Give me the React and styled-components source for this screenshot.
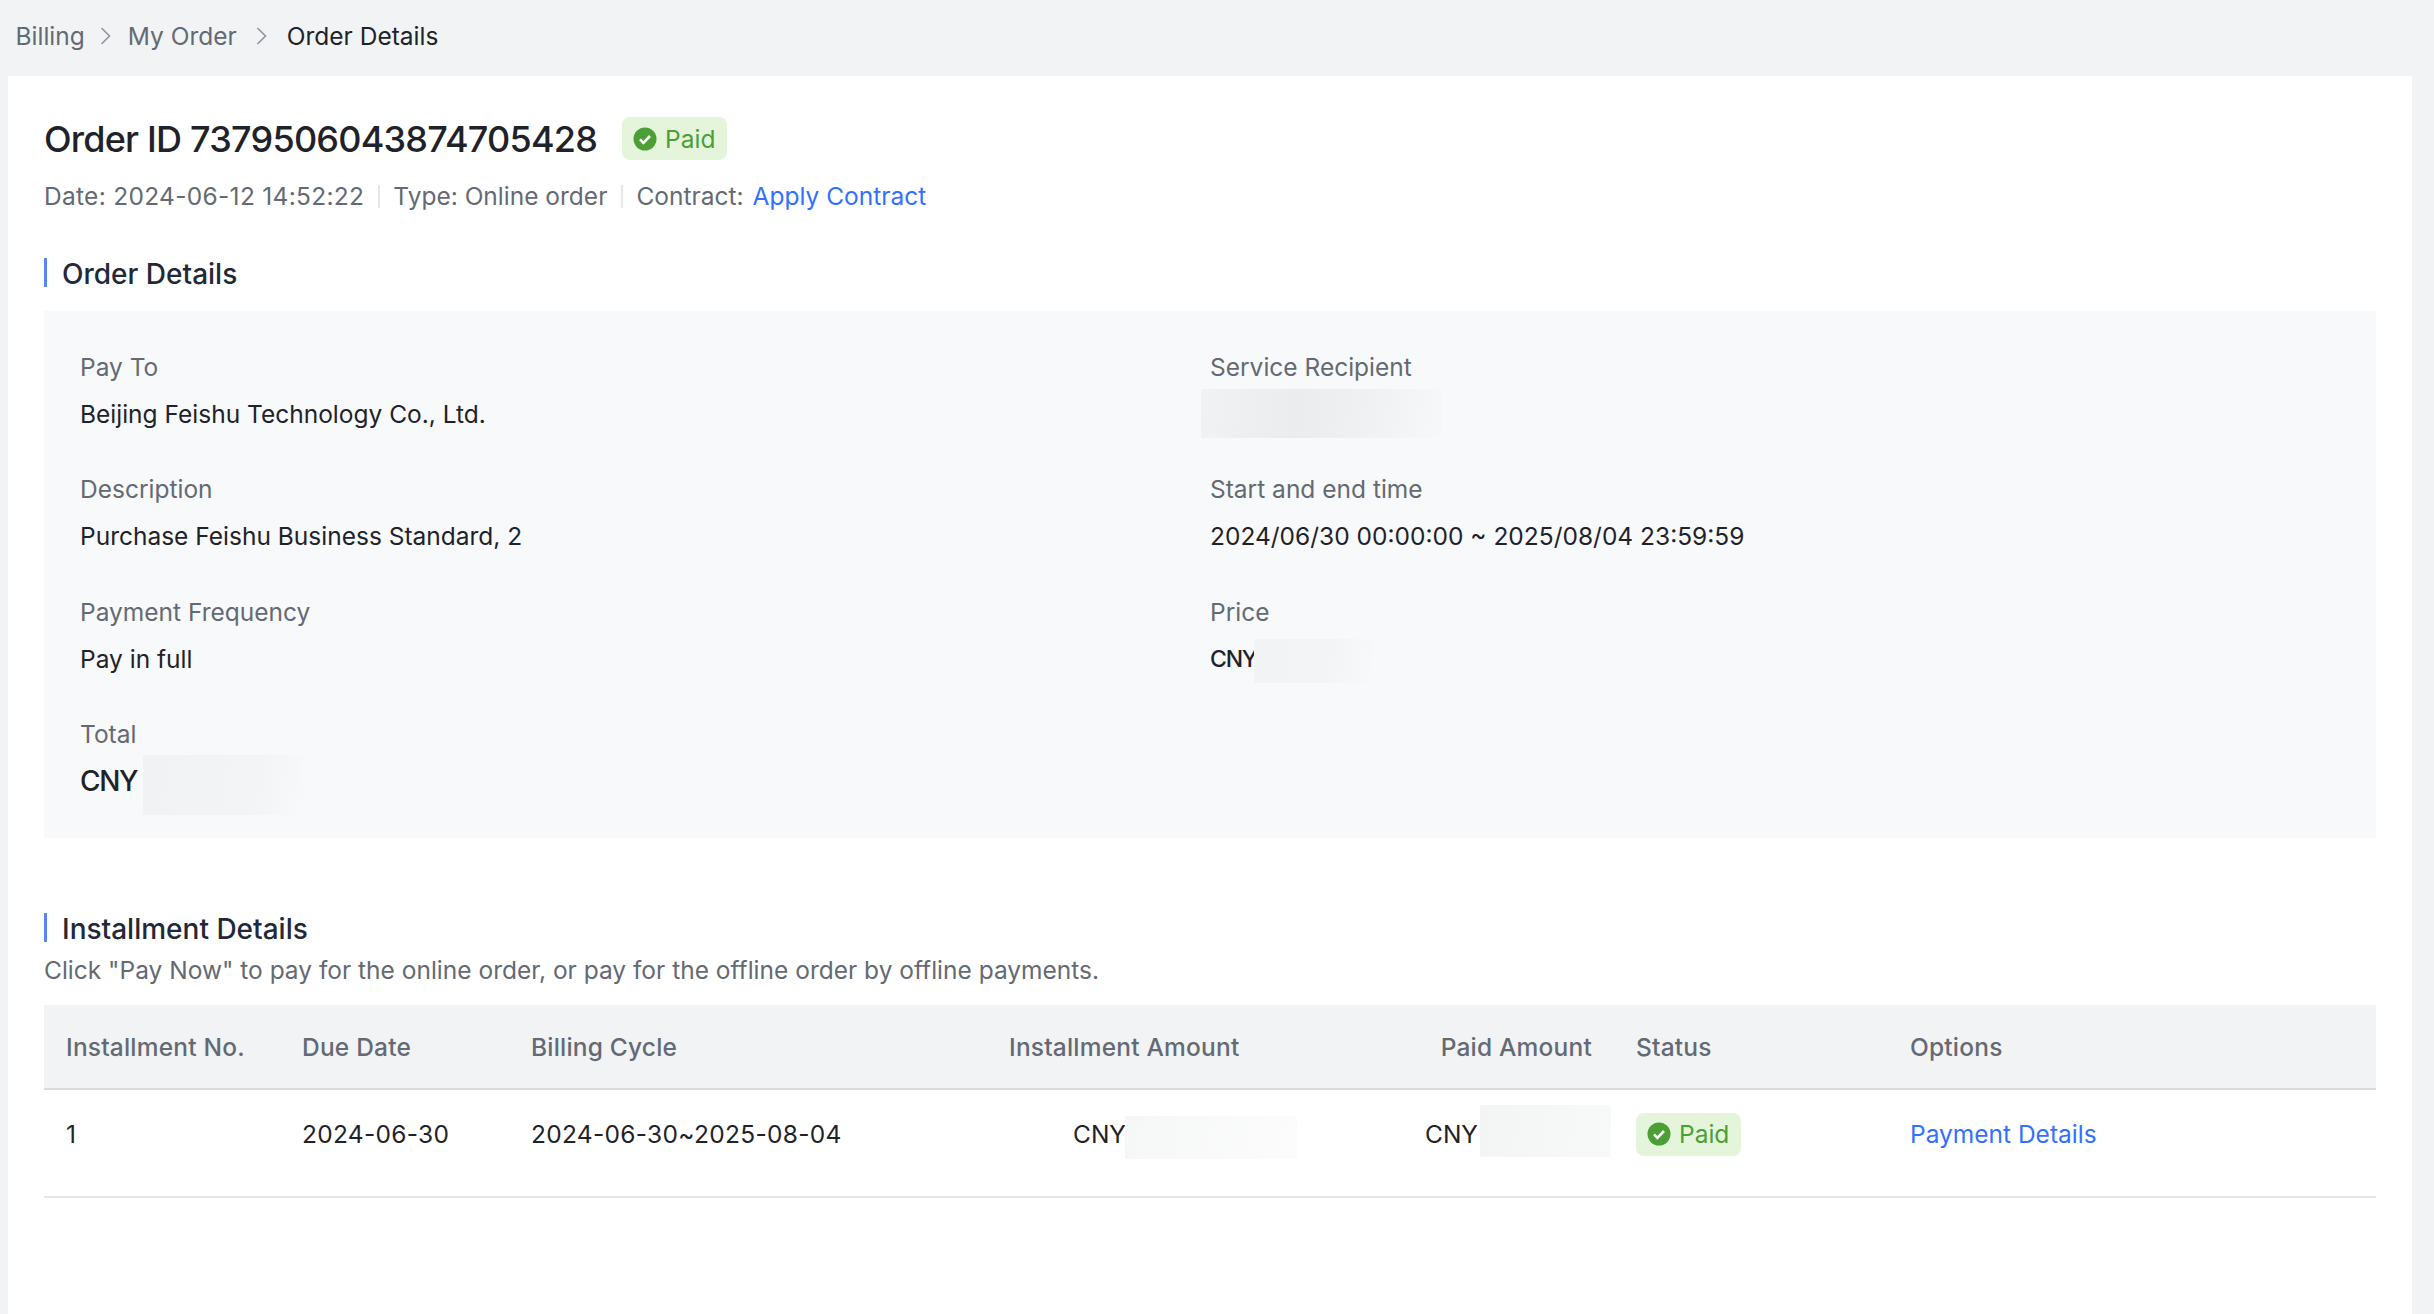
import React from 'react';
import styled, { createGlobalStyle } from 'styled-components';

const GlobalStyle = createGlobalStyle`
  html, body {
    margin: 0;
    padding: 0;
    background: #f2f3f5;
    font-family: Inter, "Noto Sans", "Liberation Sans", sans-serif;
    font-size: 24.5px;
    line-height: 32px;
    color: #1f2329;
  }
`;

const Page = styled.div`
  height: 1314px;
  display: flex;
  flex-direction: column;
  overflow: hidden;
`;

const Breadcrumb = styled.nav`
  height: 72px;
  padding: 0 0 4px 15.5px;
  display: flex;
  align-items: center;
  flex-shrink: 0;
`;

const Crumb = styled.span`
  color: ${(p) => (p.$current ? '#1f2329' : '#646a73')};
`;

const Chevron = styled.svg`
  width: 12px;
  height: 18px;
  margin: 0 ${(p) => p.$gap}px;
  fill: none;
  stroke: #8f959e;
  stroke-width: 1.6;
`;

const Card = styled.main`
  flex: 1;
  margin: 0 22px 0 8px;
  padding: 41px 36px 0;
  background: #fff;
`;

const TitleRow = styled.div`
  display: flex;
  align-items: center;
  gap: 25px;
  height: 43px;
`;

const Title = styled.h1`
  margin: 0;
  padding-top: 2px;
  font-size: 36px;
  line-height: 43px;
  font-weight: 500;
  letter-spacing: -0.78px;
`;

const Badge = styled.span`
  display: inline-flex;
  align-items: center;
  gap: 8px;
  width: 105px;
  height: 43px;
  box-sizing: border-box;
  padding-left: 11px;
  border-radius: 8px;
  background: #e4f5dc;
  color: #4c9f35;
`;

const CheckIcon = styled.svg`
  width: 24px;
  height: 24px;
  flex-shrink: 0;
`;

const Meta = styled.div`
  display: flex;
  align-items: center;
  margin-top: 20px;
  color: #646a73;
`;

const Divider = styled.i`
  width: 2px;
  height: 23px;
  margin: 0 13.5px;
  background: #e4e6e9;
`;

const Link = styled.a`
  color: #3370ff;
  margin-left: ${(p) => p.$gap || 0}px;
`;

const Digits = styled.span`
  letter-spacing: 0.3px;
`;

const SectionTitle = styled.h2`
  margin: ${(p) => p.$top}px 0 0;
  height: 29px;
  padding-left: 15px;
  border-left: 3px solid #5b86f2;
  font-size: 28px;
  line-height: 32px;
  font-weight: 500;
  color: #1f2937;
`;

const InfoPanel = styled.section`
  margin-top: 24px;
  padding: 40px 36px 41px;
  background: #f8f9fb;
  display: grid;
  grid-template-columns: 1fr 1fr;
  row-gap: 43.3px;
`;

const Field = styled.div`
  display: flex;
  flex-direction: column;
  gap: 15px;
`;

const Label = styled.div`
  color: #646a73;
`;

const Value = styled.div`
  position: relative;
  font-size: ${(p) => p.$size || 24.5}px;
  font-weight: ${(p) => p.$weight || 400};
`;

const Currency = styled.span`
  letter-spacing: ${(p) => p.$tight}px;
`;

// blurred patches that hide the private values
const Redacted = styled.span`
  position: absolute;
  left: ${(p) => p.$left}px;
  top: ${(p) => p.$top}px;
  width: ${(p) => p.$width}px;
  height: ${(p) => p.$height}px;
  background: linear-gradient(100deg, ${(p) => p.$stops});
`;

const Hint = styled.p`
  margin: 12px 0 0;
  color: #646a73;
`;

const columns = '236px 229px 478px 332px 295px 274px 488px';

const TableHead = styled.div`
  margin-top: 19px;
  height: 83px;
  display: grid;
  grid-template-columns: ${columns};
  align-items: center;
  background: #f2f3f5;
  border-bottom: 2px solid #d9dbde;
  color: #646a73;
  font-weight: 500;
  letter-spacing: 0.2px;
`;

const TableRow = styled.div`
  height: 108px;
  box-sizing: border-box;
  padding-bottom: 18px;
  display: grid;
  grid-template-columns: ${columns};
  align-items: center;
  border-bottom: 2px solid #e4e6e9;
`;

const Cell = styled.div`
  padding: 0 22px 0 ${(p) => p.$left ?? 22}px;
  text-align: ${(p) => p.$align || 'left'};
`;

const Paid = () => (
  <Badge>
    <CheckIcon viewBox="0 0 24 24">
      <circle cx="12" cy="12" r="11.5" fill="#4c9f35" />
      <path d="M7 12.4l3.4 3.4L17 9" fill="none" stroke="#fff" strokeWidth="2.6" />
    </CheckIcon>
    Paid
  </Badge>
);

export default function App() {
  return (
    <Page>
      <GlobalStyle />
      <Breadcrumb>
        <Crumb>Billing</Crumb>
        <Chevron $gap={15.5} viewBox="0 0 12 18"><path d="M1.5 1l8 8-8 8" /></Chevron>
        <Crumb>My Order</Crumb>
        <Chevron $gap={19} viewBox="0 0 12 18"><path d="M1.5 1l8 8-8 8" /></Chevron>
        <Crumb $current>Order Details</Crumb>
      </Breadcrumb>
      <Card>
        <TitleRow>
          <Title>Order ID 7379506043874705428</Title>
          <Paid />
        </TitleRow>
        <Meta>
          <Digits>Date: 2024-06-12 14:52:22</Digits>
          <Divider />
          <span>Type: Online order</span>
          <Divider />
          <span>Contract:</span>
          <Link $gap={9}>Apply Contract</Link>
        </Meta>

        <SectionTitle $top={46}>Order Details</SectionTitle>
        <InfoPanel>
          <Field>
            <Label>Pay To</Label>
            <Value>Beijing Feishu Technology Co., Ltd.</Value>
          </Field>
          <Field>
            <Label>Service Recipient</Label>
            <Value>
              &nbsp;
              <Redacted $left={-9} $top={-9} $width={241} $height={49} $stops="#f1f2f4, #ebecee 40%, #f0f1f3 70%, #f7f8fa" />
            </Value>
          </Field>
          <Field>
            <Label>Description</Label>
            <Value>Purchase Feishu Business Standard, 2</Value>
          </Field>
          <Field>
            <Label>Start and end time</Label>
            <Value>2024/06/30 00:00:00 ~ 2025/08/04 23:59:59</Value>
          </Field>
          <Field>
            <Label>Payment Frequency</Label>
            <Value>Pay in full</Value>
          </Field>
          <Field>
            <Label>Price</Label>
            <Value $weight={500} $size={23}>
              <Currency $tight={-1.2}>CNY</Currency>
              <Redacted $left={44} $top={-4} $width={120} $height={44} $stops="#f2f3f5, #f3f4f6 60%, #f8f9fb" />
            </Value>
          </Field>
          <Field>
            <Label>Total</Label>
            <Value $weight={500} $size={28}>
              <Currency $tight={-1.4}>CNY</Currency>
              <Redacted $left={63} $top={-10} $width={160} $height={60} $stops="#f1f2f4, #f3f4f6 70%, #f8f9fb" />
            </Value>
          </Field>
        </InfoPanel>

        <SectionTitle $top={75.5}>Installment Details</SectionTitle>
        <Hint>Click "Pay Now" to pay for the online order, or pay for the offline order by offline payments.</Hint>
        <TableHead>
          <Cell>Installment No.</Cell>
          <Cell>Due Date</Cell>
          <Cell>Billing Cycle</Cell>
          <Cell>Installment Amount</Cell>
          <Cell $align="right">Paid Amount</Cell>
          <Cell>Status</Cell>
          <Cell>Options</Cell>
        </TableHead>
        <TableRow>
          <Cell>1</Cell>
          <Cell><Digits>2024-06-30</Digits></Cell>
          <Cell><Digits>2024-06-30~2025-08-04</Digits></Cell>
          <Cell $left={86}>
            <Value>
              CNY
              <Redacted $left={52} $top={-2} $width={172} $height={43} $stops="#f6f7f7, #fcfcfc" />
            </Value>
          </Cell>
          <Cell $left={106}>
            <Value>
              CNY
              <Redacted $left={55} $top={-13} $width={131} $height={52} $stops="#f3f4f4, #f8f9f9" />
            </Value>
          </Cell>
          <Cell><Paid /></Cell>
          <Cell><Link>Payment Details</Link></Cell>
        </TableRow>
      </Card>
    </Page>
  );
}
